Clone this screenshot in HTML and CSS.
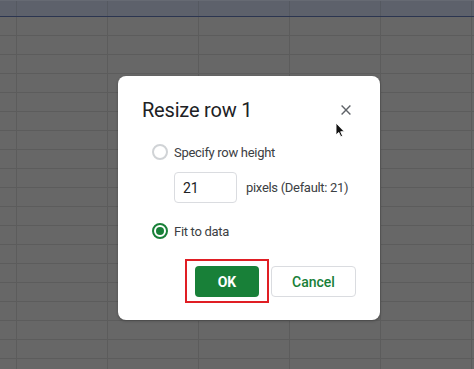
FILE: index.html
```html
<!DOCTYPE html>
<html lang="en">

<head>
    <meta charset="UTF-8">
    <meta name="viewport" content="width=device-width, initial-scale=1.0">
    <title>Resize row 1</title>

    <link rel="stylesheet" href="styles.css">
</head>

<body>
    <div id="sheet">
        <div id="col_header"></div>
        <div id="cells"></div>
    </div>

    <div id="overlay">
        <div id="dialog">
            <div class="dialog_title">
                <h2>Resize row 1</h2>
                <button class="close_btn" title="Close">
                    <svg width="10" height="10" viewBox="0 0 10 10">
                        <path d="M0.6 0.6 L9.4 9.4 M9.4 0.6 L0.6 9.4" stroke="#5f6368" stroke-width="1.4" fill="none" />
                    </svg>
                </button>
            </div>

            <label class="option">
                <span class="radio"></span>
                Specify row height
            </label>

            <div class="height_row">
                <input type="text" id="height_input" value="21" />
                <span>pixels (Default: 21)</span>
            </div>

            <label class="option">
                <span class="radio checked"></span>
                Fit to data
            </label>

            <div class="actions">
                <button class="btn btn_ok highlighted">OK</button>
                <button class="btn btn_cancel">Cancel</button>
            </div>
        </div>

        <svg class="cursor" width="11" height="16" viewBox="0 0 11 16">
            <path d="M1 1 L1 13 L3.8 10.4 L5.8 14.8 L7.6 14 L5.7 9.7 L9.4 9.7 Z" fill="#111" stroke="#fff" stroke-width="0.9" stroke-linejoin="round" />
        </svg>
    </div>
</body>

</html>
```

FILE: styles.css
```css
html,
body {
    margin: 0;
    padding: 0;
}

body {
    width: 474px;
    height: 369px;
    overflow: hidden;
    position: relative;
    background-color: #676767;
    font-family: Roboto, "Liberation Sans", sans-serif;
}

#sheet {
    display: flex;
    flex-direction: column;
    height: 100%;
}

#col_header {
    height: 15px;
    background-color: #5d616b;
    border-top: 1px solid #666a73;
    border-bottom: 1px solid #2b3550;
    /* column separators continue in the header */
    background-image: linear-gradient(to right, #555961 1px, transparent 1px);
    background-size: 91px 100%;
    background-position: 16px 0;
}

#cells {
    flex: 1;
    background-image:
        linear-gradient(to right, #5c5c5c 1px, transparent 1px),
        linear-gradient(to bottom, #5c5c5c 1px, transparent 1px);
    background-size: 91px 100%, 100% 19px;
    background-position: 16px 0, 0 18px;
}

#overlay {
    position: absolute;
    left: 0;
    top: 0;
    width: 100%;
    height: 100%;
}

#dialog {
    position: absolute;
    left: 118px;
    top: 76px;
    width: 262px;
    height: 244px;
    box-sizing: border-box;
    padding: 20px 24px 0 24px;

    background-color: #fff;
    border-radius: 8px;
    box-shadow: 0 1px 3px rgba(0, 0, 0, 0.25);
}

.dialog_title {
    display: flex;
    flex-direction: row;
    justify-content: space-between;
    align-items: center;
    height: 28px;
}

.dialog_title h2 {
    margin: 0;
    font-size: 20px;
    font-weight: 400;
    line-height: 28px;
    letter-spacing: -0.2px;
    color: #202124;
}

.close_btn {
    width: 24px;
    height: 24px;
    margin-right: -2px;
    padding: 0;
    border: none;
    background: none;
    display: flex;
    align-items: center;
    justify-content: center;
}

.option {
    display: flex;
    flex-direction: row;
    align-items: center;
    height: 20px;
    margin-left: 10px;
    font-size: 13px;
    letter-spacing: -0.3px;
    color: #3c4043;
    white-space: nowrap;
}

.option:first-of-type {
    margin-top: 18px;
}

.radio {
    width: 12px;
    height: 12px;
    border: 2px solid #d0d3d6;
    border-radius: 50%;
    margin-right: 6px;
    position: relative;
}

.radio.checked {
    border-color: #188038;
}

.radio.checked::after {
    content: "";
    position: absolute;
    left: 2px;
    top: 2px;
    width: 8px;
    height: 8px;
    border-radius: 50%;
    background-color: #188038;
}

.height_row {
    display: flex;
    flex-direction: row;
    align-items: center;
    margin: 10px 0 18px 32px;
    font-size: 13px;
    letter-spacing: -0.3px;
    color: #3c4043;
    white-space: nowrap;
}

#height_input {
    width: 63px;
    height: 31px;
    box-sizing: border-box;
    padding: 0 8px;
    margin-right: 9px;
    border: 1px solid #dadce0;
    border-radius: 4px;
    font-family: Roboto, "Liberation Sans", sans-serif;
    font-size: 14px;
    color: #202124;
}

.actions {
    display: flex;
    flex-direction: row;
    justify-content: flex-end;
    margin-top: 25px;
}

.btn {
    height: 31px;
    border-radius: 4px;
    font-family: Roboto, "Liberation Sans", sans-serif;
    font-size: 14px;
    font-weight: 500;
    padding: 0;
}

.btn_ok {
    width: 64px;
    border: none;
    background-color: #188038;
    color: #fff;
    font-weight: 700;
    position: relative;
}

.btn_cancel {
    width: 85px;
    margin-left: 12px;
    border: 1px solid #dadce0;
    background-color: #fff;
    color: #188038;
}

/* red annotation box round the OK button */
.highlighted::after {
    content: "";
    position: absolute;
    left: -10px;
    right: -10px;
    top: -7px;
    bottom: -6px;
    border: 2px solid #e01e24;
}

.cursor {
    position: absolute;
    left: 335px;
    top: 122px;
}
```
